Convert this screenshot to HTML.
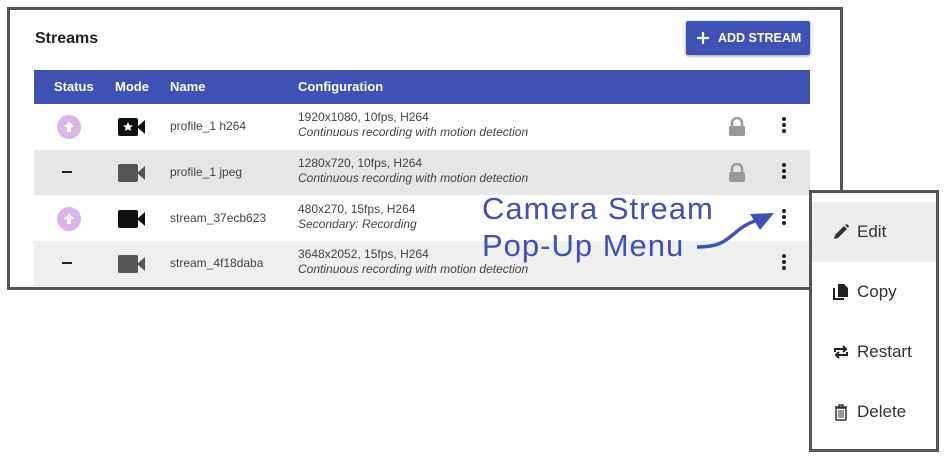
<!DOCTYPE html>
<html><head><style>
body{margin:0;width:945px;height:457px;background:#fff;position:relative;overflow:hidden;font-family:"Liberation Sans",Arial,sans-serif}
.box{position:absolute;left:7px;top:7px;width:830px;height:277px;border:3px solid #555;background:#fff;overflow:hidden}
.abs{position:absolute}
.title{left:25px;top:20px;font-size:16px;font-weight:bold;color:#222}
.btn{left:676px;top:11px;width:124px;height:34px;background:#3f51b5;color:#fff;font-size:12.5px;font-weight:bold;box-shadow:0 1px 3px rgba(0,0,0,.4);border-radius:2px;line-height:34px}
.hdr{left:24px;top:60px;width:776px;height:34px;background:#3f51b5;color:#fff;font-size:13px;font-weight:bold;line-height:34px}
.row{left:24px;width:776px;height:45px;font-size:12px;color:#444}
.t1{position:absolute;left:264px;top:6px}
.t2{position:absolute;left:264px;top:21px;font-style:italic}
.name{position:absolute;left:136px;top:15px}
.circ{position:absolute;left:23px;top:11px;width:24px;height:24px;border-radius:50%;background:#dbb5ea}
.dash{position:absolute;left:28px;top:21px;width:10px;height:2px;background:#222}
.dots{position:absolute;left:748px;top:13px;width:4px}
.dots i{display:block;width:4px;height:4px;border-radius:50%;background:#222;margin-bottom:2px}
.lock{position:absolute;left:694px;top:13px}
.menu{left:809px;top:190px;width:124px;height:256px;border:3px solid #555;background:#fff}
.mi{position:absolute;left:0;width:124px;height:60px;font-size:17px;color:#333;line-height:60px}
.mi span{position:absolute;left:45px}
.mi svg{position:absolute;left:20px;top:21px}
</style></head><body>
<div class="box">
<div class="abs title">Streams</div>
<div class="abs btn"><svg class="abs" style="left:10px;top:10px" width="14" height="14"><path d="M7 1v12M1 7h12" stroke="#fff" stroke-width="2.2"/></svg><span style="position:absolute;left:32px">ADD STREAM</span></div>
<div class="abs hdr"><span class="abs" style="left:20px">Status</span><span class="abs" style="left:81px">Mode</span><span class="abs" style="left:136px">Name</span><span class="abs" style="left:264px">Configuration</span></div>

<div class="abs row" style="top:94px;background:#fff">
<div class="circ"><svg width="24" height="24"><path d="M12 6l-5 6h3v5h4v-5h3z" fill="#fff"/></svg></div>
<svg class="abs" style="left:84px;top:14px" width="28" height="18"><rect x="0" y="0" width="20" height="18" rx="2" fill="#111"/><path d="M19 9l8-7v14z" fill="#111"/><path d="M10 4l1.5 3.2 3.3.3-2.5 2.2.8 3.3-3.1-1.8-3.1 1.8.8-3.3-2.5-2.2 3.3-.3z" fill="#fff"/></svg>
<div class="name">profile_1 h264</div>
<div class="t1">1920x1080, 10fps, H264</div><div class="t2">Continuous recording with motion detection</div>
<svg class="lock" width="18" height="20"><path d="M4 9V6a5 5 0 0 1 10 0v3" stroke="#999" stroke-width="2.5" fill="none"/><rect x="1" y="9" width="16" height="10" rx="2" fill="#999"/></svg>
<div class="dots"><i></i><i></i><i></i></div>
</div>
<div class="abs row" style="top:140px;background:#e6e6e6">
<div class="dash"></div>
<svg class="abs" style="left:84px;top:14px" width="28" height="18"><rect x="0" y="0" width="20" height="18" rx="2" fill="#555"/><path d="M19 9l8-7v14z" fill="#555"/></svg>
<div class="name">profile_1 jpeg</div>
<div class="t1">1280x720, 10fps, H264</div><div class="t2">Continuous recording with motion detection</div>
<svg class="lock" width="18" height="20"><path d="M4 9V6a5 5 0 0 1 10 0v3" stroke="#999" stroke-width="2.5" fill="none"/><rect x="1" y="9" width="16" height="10" rx="2" fill="#999"/></svg>
<div class="dots"><i></i><i></i><i></i></div>
</div>
<div class="abs row" style="top:186px;background:#fff">
<div class="circ"><svg width="24" height="24"><path d="M12 6l-5 6h3v5h4v-5h3z" fill="#fff"/></svg></div>
<svg class="abs" style="left:84px;top:14px" width="28" height="18"><rect x="0" y="0" width="20" height="18" rx="2" fill="#111"/><path d="M19 9l8-7v14z" fill="#111"/></svg>
<div class="name">stream_37ecb623</div>
<div class="t1">480x270, 15fps, H264</div><div class="t2">Secondary: Recording</div>
<div class="dots"><i></i><i></i><i></i></div>
</div>
<div class="abs row" style="top:231px;background:#efefef">
<div class="dash"></div>
<svg class="abs" style="left:84px;top:14px" width="28" height="18"><rect x="0" y="0" width="20" height="18" rx="2" fill="#555"/><path d="M19 9l8-7v14z" fill="#555"/></svg>
<div class="name">stream_4f18daba</div>
<div class="t1">3648x2052, 15fps, H264</div><div class="t2">Continuous recording with motion detection</div>
<div class="dots"><i></i><i></i><i></i></div>
</div>
</div>

<div class="abs" style="left:482px;top:190px;font-size:31px;color:#3f51b5;line-height:37px;letter-spacing:1px">Camera Stream<br>Pop-Up Menu</div>
<svg class="abs" style="left:690px;top:205px" width="90" height="50"><path d="M7 42 C30 42 35 36 45 28 C52 22 58 18 68 15" stroke="#3f51b5" stroke-width="3.5" fill="none"/><path d="M84 8 L60 9 L70 25 Z" fill="#3f51b5"/></svg>

<div class="abs menu">
<div class="mi" style="top:9px;background:#ececec"><svg width="18" height="18"><path d="M2 16l1-4 9-9 3 3-9 9z M13 2l2-1 2 2-1 2z" fill="#333"/></svg><span>Edit</span></div>
<div class="mi" style="top:69px"><svg width="18" height="18"><path d="M2 5v11h10" stroke="#222" stroke-width="2" fill="none"/><path d="M6 1h6l4 4v9H6z" fill="#222"/></svg><span>Copy</span></div>
<div class="mi" style="top:129px"><svg width="18" height="18"><path d="M3 9V6h11M11 3l3 3-3 3M15 9v3H4M7 15l-3-3 3-3" stroke="#222" stroke-width="2" fill="none"/></svg><span>Restart</span></div>
<div class="mi" style="top:189px"><svg width="18" height="18"><path d="M3 4h12M7 4V2h4v2" stroke="#333" stroke-width="1.5" fill="none"/><rect x="4" y="5" width="10" height="12" rx="1" stroke="#333" stroke-width="1.5" fill="none"/><path d="M7 7v8M9 7v8M11 7v8" stroke="#333"/></svg><span>Delete</span></div>
</div>
</body></html>
